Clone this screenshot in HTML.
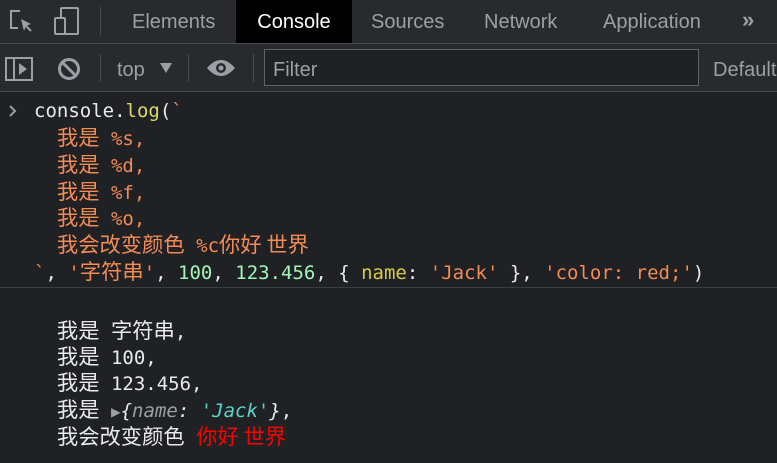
<!DOCTYPE html>
<html><head><meta charset="utf-8"><style>
body{margin:0;width:777px;height:463px;background:#202124;overflow:hidden;position:relative;font-family:"Liberation Sans","Noto Sans CJK SC",sans-serif}
.tb{position:absolute;left:0;top:0;width:777px;height:44px;background:#292a2d;border-bottom:1px solid #494c50;box-sizing:border-box}
.tab{position:absolute;top:0;height:43px;line-height:44px;font-size:20px;color:#9aa0a6}
.tb2{position:absolute;left:0;top:44px;width:777px;height:48px;background:#292a2d;border-bottom:1px solid #494c50;box-sizing:border-box}
.sep{position:absolute;width:1px;background:#494c50}
.ln{position:absolute;left:34px;font-family:"DejaVu Sans Mono","Liberation Mono",monospace;font-size:19px;white-space:pre;color:#e8eaed;height:26px;line-height:26px}
.c{font-family:"Noto Sans CJK SC",sans-serif;font-size:21.3px}
.o{color:#f28b54}.g{color:#a1f7b5}.y{color:#d9c94a}.l{color:#ddd76e}
</style></head><body>
<div class="tb">
<svg style="position:absolute;left:8px;top:8px" width="26" height="26" viewBox="0 0 26 26" fill="none" stroke="#9aa0a6" stroke-width="2"><path d="M12 3H3v17h7"/><path d="M13 11l3 12 2-5 5-2z" fill="#9aa0a6" stroke="none"/><path d="M18 18l5 5"/></svg>
<svg style="position:absolute;left:54px;top:7px" width="28" height="28" viewBox="0 0 28 28" fill="none" stroke="#9aa0a6" stroke-width="2"><rect x="7" y="1" width="17" height="26" rx="1"/><rect x="1" y="11" width="10" height="16" rx="1" fill="#292a2d"/></svg>
<div class="sep" style="left:100px;top:7px;height:28px"></div>
<div class="tab" style="left:132px">Elements</div>
<div class="tab" style="left:236px;width:116px;background:#000;color:#fff;text-align:center">Console</div>
<div class="tab" style="left:371px">Sources</div>
<div class="tab" style="left:484px">Network</div>
<div class="tab" style="left:603px">Application</div>
<div class="tab" style="left:742px;font-size:22px;font-weight:bold;top:-2px">»</div>
</div>
<div class="tb2">
<svg style="position:absolute;left:5px;top:13px" width="28" height="24" viewBox="0 0 28 24" fill="none" stroke="#9aa0a6" stroke-width="2"><rect x="1" y="1" width="26" height="22"/><path d="M9 1v22"/><path d="M14 6l8 6-8 6z" fill="#9aa0a6" stroke="none"/></svg>
<svg style="position:absolute;left:57px;top:13px" width="24" height="24" viewBox="0 0 24 24" fill="none" stroke="#9aa0a6" stroke-width="3"><circle cx="12" cy="12" r="9.5"/><path d="M5 5l14 14"/></svg>
<div class="sep" style="left:100px;top:10px;height:28px"></div>
<div style="position:absolute;left:117px;top:15px;font-size:20px;color:#9aa0a6">top</div>
<div style="position:absolute;left:160px;top:19px;width:0;height:0;border-left:6px solid transparent;border-right:6px solid transparent;border-top:10px solid #9aa0a6"></div>
<div class="sep" style="left:188px;top:10px;height:28px"></div>
<svg style="position:absolute;left:206px;top:14px" width="30" height="20" viewBox="0 0 30 20"><path d="M1 10Q15-6 29 10Q15 26 1 10z" fill="#9aa0a6"/><circle cx="15" cy="10" r="5" fill="#292a2d"/><circle cx="15" cy="10" r="2.5" fill="#9aa0a6"/></svg>
<div class="sep" style="left:253px;top:10px;height:28px"></div>
<div style="position:absolute;left:264px;top:5px;width:435px;height:37px;box-sizing:border-box;border:1px solid #5f6368;background:#202124"></div>
<div style="position:absolute;left:273px;top:15px;font-size:20px;color:#9aa0a6">Filter</div>
<div style="position:absolute;left:713px;top:15px;font-size:20px;color:#9aa0a6">Default</div>
</div>
<svg style="position:absolute;left:8px;top:104px" width="10" height="14" viewBox="0 0 10 14" fill="none" stroke="#9aa0a6" stroke-width="2"><path d="M2 2l5 5-5 5"/></svg>
<div class="ln" style="top:98px">console.<span class="l">log</span>(<span class="o">`</span></div>
<div class="ln o" style="top:124px">  <span class="c">我是</span> %s,</div>
<div class="ln o" style="top:151px">  <span class="c">我是</span> %d,</div>
<div class="ln o" style="top:178px">  <span class="c">我是</span> %f,</div>
<div class="ln o" style="top:204px">  <span class="c">我是</span> %o,</div>
<div class="ln o" style="top:231px">  <span class="c">我会改变颜色</span> %c<span class="c">你好 世界</span></div>
<div class="ln" style="top:258px"><span class="o">`</span>, <span class="o">'<span class="c">字符串</span>'</span>, <span class="g">100</span>, <span class="g">123.456</span>, { <span class="y">name</span>: <span class="o">'Jack'</span> }, <span class="o">'color: red;'</span>)</div>
<div style="position:absolute;left:0;top:287px;width:777px;height:1px;background:#3c3d40"></div>
<div class="ln" style="top:317px">  <span class="c">我是</span> <span class="c">字符串</span>,</div>
<div class="ln" style="top:343px">  <span class="c">我是</span> 100,</div>
<div class="ln" style="top:369px">  <span class="c">我是</span> 123.456,</div>
<div class="ln" style="top:396px">  <span class="c">我是</span> <span style="color:#9aa0a6;font-size:16px">▶</span><i>{<span style="color:#9aa0a6">name</span>: <span style="color:#5cd5c6">'Jack'</span>}</i>,</div>
<div class="ln" style="top:423px">  <span class="c">我会改变颜色</span> <span class="c" style="color:#f00">你好 世界</span></div>
</body></html>
